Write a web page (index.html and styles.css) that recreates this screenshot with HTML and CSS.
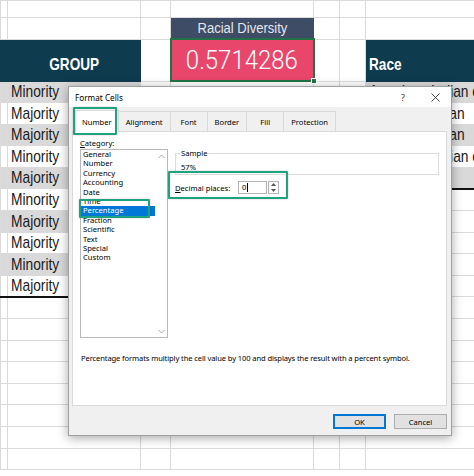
FILE: index.html
```html
<!DOCTYPE html>
<html lang="en">
<head>
    <meta charset="UTF-8">
    <meta name="viewport" content="width=device-width, initial-scale=1.0">
    <title>Racial Diversity - Format Cells</title>
    <link rel="stylesheet" href="styles.css">
</head>
<body>
    <!-- Worksheet -->
    <table class="sheet">
        <colgroup>
            <col style="width:7px"><col style="width:133px"><col style="width:30px"><col style="width:143px">
            <col style="width:26px"><col style="width:26px"><col style="width:110px">
        </colgroup>
        <tr class="r-top"><td></td><td></td><td></td><td></td><td></td><td></td><td></td></tr>
        <tr class="r-sub"><td></td><td></td><td></td><td class="div-head"><span class="t">Racial Diversity</span></td><td></td><td></td><td></td></tr>
        <tr class="r-head">
            <td class="hdr"></td><td class="hdr"><span class="t">GROUP</span></td><td></td>
            <td class="value"><span class="t">0.5714286</span><span class="handle"></span></td>
            <td></td><td></td><td class="hdr race-hdr"><span class="t">Race</span></td>
        </tr>
        <tr class="r-data"><td class="shade"></td><td class="shade"><span class="t">Minority</span></td><td></td><td></td><td></td><td></td><td class="shade"><span class="t">American Indian or Alaska Native</span></td></tr>
        <tr class="r-data"><td></td><td><span class="t">Majority</span></td><td></td><td></td><td></td><td></td><td><span class="t">Black or African</span></td></tr>
        <tr class="r-data"><td class="shade"></td><td class="shade"><span class="t">Majority</span></td><td></td><td></td><td></td><td></td><td class="shade"><span class="t">Asian American</span></td></tr>
        <tr class="r-data"><td></td><td><span class="t">Minority</span></td><td></td><td></td><td></td><td></td><td><span class="t">Native Hawaiian or Other</span></td></tr>
        <tr class="r-data"><td class="shade"></td><td class="shade"><span class="t">Majority</span></td><td></td><td></td><td></td><td></td><td class="shade end"><span class="t">White</span></td></tr>
        <tr class="r-data"><td></td><td><span class="t">Minority</span></td><td></td><td></td><td></td><td></td><td></td></tr>
        <tr class="r-data"><td class="shade"></td><td class="shade"><span class="t">Majority</span></td><td></td><td></td><td></td><td></td><td></td></tr>
        <tr class="r-data"><td></td><td><span class="t">Majority</span></td><td></td><td></td><td></td><td></td><td></td></tr>
        <tr class="r-data"><td class="shade"></td><td class="shade"><span class="t">Minority</span></td><td></td><td></td><td></td><td></td><td></td></tr>
        <tr class="r-data"><td class="end"></td><td class="end"><span class="t">Majority</span></td><td></td><td></td><td></td><td></td><td></td></tr>
        <tr class="r-data"><td></td><td></td><td></td><td></td><td></td><td></td><td></td></tr>
        <tr class="r-data"><td></td><td></td><td></td><td></td><td></td><td></td><td></td></tr>
        <tr class="r-data"><td></td><td></td><td></td><td></td><td></td><td></td><td></td></tr>
        <tr class="r-data"><td></td><td></td><td></td><td></td><td></td><td></td><td></td></tr>
        <tr class="r-data"><td></td><td></td><td></td><td></td><td></td><td></td><td></td></tr>
        <tr class="r-data"><td></td><td></td><td></td><td></td><td></td><td></td><td></td></tr>
        <tr class="r-data"><td></td><td></td><td></td><td></td><td></td><td></td><td></td></tr>
        <tr class="r-data"><td></td><td></td><td></td><td></td><td></td><td></td><td></td></tr>
    </table>

    <!-- Format Cells dialog -->
    <div class="dialog">
        <div class="titlebar">
            <span class="title">Format Cells</span>
            <span class="help">?</span>
            <span class="close">
                <svg width="9" height="9" viewBox="0 0 9 9"><path d="M0.5 0.5 L8.5 8.5 M8.5 0.5 L0.5 8.5" stroke="#333" stroke-width="0.9" fill="none"/></svg>
            </span>
        </div>

        <div class="tabs">
            <div class="tab active">Number</div>
            <div class="tab">Alignment</div>
            <div class="tab">Font</div>
            <div class="tab">Border</div>
            <div class="tab">Fill</div>
            <div class="tab">Protection</div>
        </div>

        <div class="panel">
            <div class="category">
                <div class="label"><u>C</u>ategory:</div>
                <div class="listbox">
                    <ul class="items">
                        <li>General</li>
                        <li>Number</li>
                        <li>Currency</li>
                        <li>Accounting</li>
                        <li>Date</li>
                        <li>Time</li>
                        <li class="sel">Percentage</li>
                        <li>Fraction</li>
                        <li>Scientific</li>
                        <li>Text</li>
                        <li>Special</li>
                        <li>Custom</li>
                    </ul>
                    <div class="scroll">
                        <svg width="7" height="5" viewBox="0 0 7 5"><path d="M0.5 4 L3.5 1 L6.5 4" stroke="#a6a6a6" fill="none"/></svg>
                        <svg width="7" height="5" viewBox="0 0 7 5"><path d="M0.5 1 L3.5 4 L6.5 1" stroke="#a6a6a6" fill="none"/></svg>
                    </div>
                </div>
            </div>

            <div class="options">
                <fieldset class="sample">
                    <legend>Sample</legend>
                    <div class="sample-value">57%</div>
                </fieldset>
                <div class="decimals">
                    <span class="dec-label"><u>D</u>ecimal places:</span>
                    <span class="dec-input">0<span class="caret"></span></span>
                    <span class="spinner">
                        <svg width="5" height="3" viewBox="0 0 5 3"><path d="M0 3 L2.5 0 L5 3 Z" fill="#555"/></svg>
                        <svg width="5" height="3" viewBox="0 0 5 3"><path d="M0 0 L2.5 3 L5 0 Z" fill="#555"/></svg>
                    </span>
                </div>
            </div>

            <p class="desc">Percentage formats multiply the cell value by 100 and displays the result with a percent symbol.</p>
        </div>

        <div class="footer">
            <button class="btn ok">OK</button>
            <button class="btn">Cancel</button>
        </div>

        <!-- highlight marks -->
        <div class="mark mark-tab"></div>
        <div class="mark mark-item"></div>
        <div class="mark mark-dec"></div>
    </div>
</body>
</html>
```

FILE: styles.css
```css
* {
    box-sizing: border-box;
}
body {
    margin: 0;
    overflow: hidden;
    background-color: #ffffff;
    font-family: "Liberation Sans", Arial, sans-serif;
}

/* worksheet */
.sheet {
    border-collapse: collapse;
    table-layout: fixed;
    width: 475px;
}
.sheet td {
    border: 1px solid #dadada;
    padding: 0 3px 1px;
    font-size: 17px;
    line-height: 19px;
    vertical-align: bottom;
    white-space: nowrap;
    color: #1a1a1a;
}
/* Excel's narrow face: squeeze the sans text sideways */
.t {
    display: inline-block;
    transform: scaleX(0.81);
    transform-origin: left center;
}
.r-top { height: 17px; }
.r-sub { height: 21px; }
.r-head { height: 42px; }
.r-data { height: 21.6px; }

.sheet td.shade {
    background-color: #d9d9d9;
}
.sheet td.end {
    border-bottom: 2px solid #111;
}
.sheet td.hdr {
    background-color: #0f3b4f;
    border-color: #0f3b4f;
    color: #ffffff;
    font-weight: bold;
    font-size: 17px;
    text-align: center;
    padding-bottom: 7px;
}
.sheet td.hdr .t {
    transform: scaleX(0.8);
    transform-origin: center;
}
.sheet td.race-hdr {
    text-align: left;
}
.sheet td.race-hdr .t {
    transform-origin: left center;
}
.sheet td.div-head {
    background-color: #3f4c66;
    border-color: #3f4c66;
    color: #e4e7ec;
    font-size: 15.5px;
    text-align: center;
    vertical-align: middle;
}
.sheet td.div-head .t {
    transform: scaleX(0.84);
    transform-origin: center;
}
.sheet td.value {
    position: relative;
    background-color: #e9466c;
    border: 2px solid #217346;
    color: #ffffff;
    font-family: Roboto, "Liberation Sans", sans-serif;
    font-weight: 300;
    font-size: 26px;
    line-height: 34px;
    text-align: center;
    vertical-align: middle;
    padding: 0;
}
.sheet td.value .t {
    transform: scaleX(0.92);
    transform-origin: center;
}
.handle {
    position: absolute;
    right: -4px;
    bottom: -4px;
    width: 6px;
    height: 6px;
    background-color: #217346;
    border: 1px solid #ffffff;
}

/* dialog */
.dialog {
    position: absolute;
    left: 68px;
    top: 86px;
    width: 384px;
    height: 350px;
    display: flex;
    flex-direction: column;
    background-color: #f0f0f0;
    border: 1px solid #a0a0a0;
    box-shadow: 0 2px 10px rgba(0, 0, 0, 0.35);
    font-family: "Noto Sans", "Open Sans", sans-serif;
    font-size: 7.6px;
    color: #000;
}
.titlebar {
    height: 20px;
    display: flex;
    align-items: center;
    background-color: #ffffff;
    padding-left: 6px;
}
.title {
    flex: 1;
    font-size: 8.2px;
}
.help, .close {
    width: 32px;
    display: flex;
    justify-content: center;
    align-items: center;
}
.help {
    font-size: 9px;
    color: #333;
}

.tabs {
    display: flex;
    align-items: flex-end;
    height: 24px;
    margin-left: 6px;
}
.tab {
    height: 20px;
    min-width: 38px;
    padding: 0 7px;
    display: flex;
    align-items: center;
    justify-content: center;
    border: 1px solid #d9d9d9;
    border-bottom: none;
    margin-right: -1px;
    background-color: #f0f0f0;
}
.tab.active {
    height: 22px;
    padding: 0 6px;
    margin-bottom: -1px;
    background-color: #ffffff;
    position: relative;
    z-index: 1;
}

.panel {
    height: 275px;
    margin: 0 4px 0 3px;
    padding: 6px 7px 0;
    background-color: #ffffff;
    border: 1px solid #d9d9d9;
    display: grid;
    grid-template-columns: 88px 1fr;
    grid-template-rows: auto auto;
    column-gap: 7px;
    align-content: start;
}
.label {
    height: 11px;
    line-height: 11px;
}
.listbox {
    height: 189px;
    display: flex;
    border: 1px solid #b9b9b9;
}
.items {
    flex: 1;
    list-style: none;
    margin: 0;
    padding: 0;
}
.items li {
    height: 9.4px;
    line-height: 9.4px;
    padding-left: 2px;
}
.items li.sel {
    background-color: #0078d7;
    color: #ffffff;
}
.scroll {
    width: 12px;
    display: flex;
    flex-direction: column;
    justify-content: space-between;
    align-items: center;
    padding: 4px 0 3px;
}

.options {
    padding-top: 10px;
}
.sample {
    margin: 0;
    padding: 1px 5px 0;
    height: 27px;
    border: 1px solid #dcdcdc;
}
.sample legend {
    padding: 0 1px;
    margin-left: -1px;
    line-height: 10px;
}
.sample-value {
    line-height: 10px;
    margin-top: 3px;
}
.decimals {
    display: flex;
    align-items: center;
    margin-top: 6px;
    height: 13px;
}
.dec-label {
    width: 63px;
}
.dec-input {
    width: 29px;
    height: 13px;
    border: 1px solid #b4b4b4;
    padding-left: 3px;
    line-height: 11px;
    display: flex;
    align-items: center;
}
.caret {
    width: 1px;
    height: 9px;
    background-color: #000;
    margin-left: 1px;
}
.spinner {
    width: 11px;
    height: 13px;
    margin-left: 1px;
    border: 1px solid #b4b4b4;
    display: flex;
    flex-direction: column;
    justify-content: space-around;
    align-items: center;
}

.desc {
    grid-column: 1 / 3;
    margin: 15px 0 0 1px;
    line-height: 10px;
    letter-spacing: -0.12px;
    white-space: nowrap;
}

.footer {
    flex: 1;
    display: flex;
    justify-content: flex-end;
    align-items: flex-start;
    gap: 8px;
    padding: 8px 4px 0 0;
}
.btn {
    width: 53px;
    height: 15px;
    padding: 0;
    background-color: #e1e1e1;
    border: 1px solid #adadad;
    font-family: "Noto Sans", "Open Sans", sans-serif;
    font-size: 7.6px;
    color: #000;
}
.btn.ok {
    border: 2px solid #0078d7;
}

/* green highlight marks drawn over the dialog */
.mark {
    position: absolute;
    border: 2.5px solid #1fa37f;
    border-radius: 1px;
    box-shadow: 0 0 2px rgba(0, 0, 0, 0.25);
    z-index: 2;
}
.mark-tab {
    left: 4px;
    top: 20px;
    width: 44px;
    height: 28px;
}
.mark-item {
    left: 10px;
    top: 112px;
    width: 71px;
    height: 19px;
}
.mark-dec {
    left: 99px;
    top: 84px;
    width: 120px;
    height: 28px;
}
```
